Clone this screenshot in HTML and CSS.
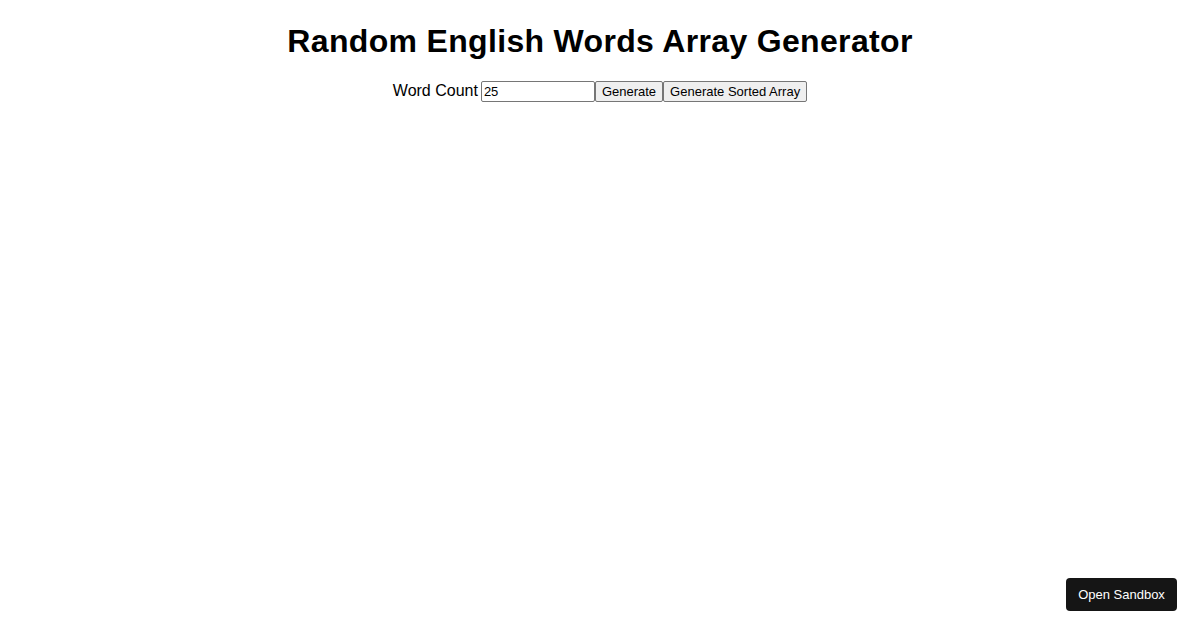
FILE: index.html
```html
<!DOCTYPE html>
<html>
<head>
<meta charset="utf-8">
<link rel="stylesheet" href="styles.css">
</head>
<body>
<div class="app">
  <h1 class="title">Random English Words Array Generator</h1>
  <div class="controls">
    <label class="label" for="count">Word Count</label>
    <input id="count" class="count" type="number" value="25">
    <button class="btn">Generate</button>
    <button class="btn">Generate Sorted Array</button>
  </div>
</div>
<a class="sandbox">Open Sandbox</a>
</body>
</html>
```
FILE: styles.css
```css
html, body {
  background: #fff;
}
body {
  margin: 8px;
  font-family: "Liberation Sans", Arial, sans-serif;
  color: #000;
}
.app {
  text-align: center;
}
.title {
  font-size: 32px;
  font-weight: bold;
  letter-spacing: 0.33px;
  margin: 14.5px 0 21.44px;
}
.controls {
  display: flex;
  justify-content: center;
  align-items: center;
}
.label {
  font-size: 16px;
  margin-right: 3px;
}
.count {
  font-family: "Liberation Sans", Arial, sans-serif;
  font-size: 13px;
  width: 114px;
  height: 21px;
  box-sizing: border-box;
  border: 1px solid #767676;
  border-radius: 2px;
  padding: 1px 2px;
  margin: 0;
  -moz-appearance: textfield;
}
.count::-webkit-outer-spin-button,
.count::-webkit-inner-spin-button {
  -webkit-appearance: none;
  margin: 0;
}
.btn {
  font-family: "Liberation Sans", Arial, sans-serif;
  font-size: 13px;
  height: 21px;
  box-sizing: border-box;
  background: #efefef;
  border: 1px solid #767676;
  border-radius: 2px;
  padding: 1px 6px;
  margin: 0;
  color: #000;
}
.sandbox {
  position: fixed;
  right: 23px;
  bottom: 19px;
  width: 111px;
  height: 33px;
  box-sizing: border-box;
  display: flex;
  align-items: center;
  justify-content: center;
  background: #151515;
  color: #fff;
  font-size: 13px;
  border-radius: 4px;
}
```
